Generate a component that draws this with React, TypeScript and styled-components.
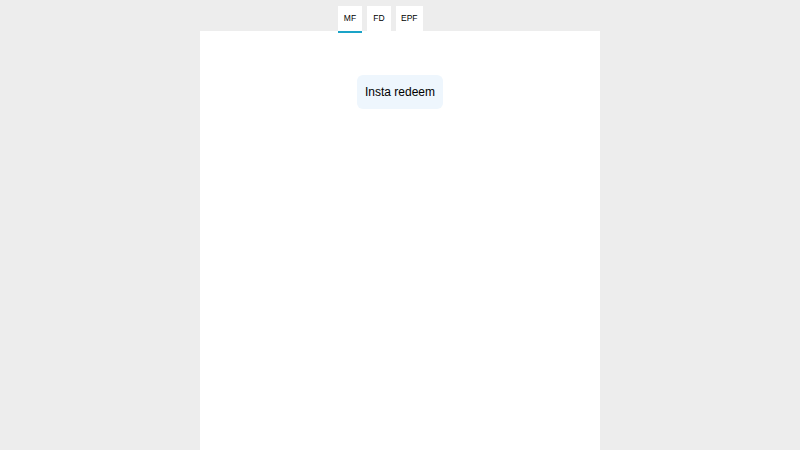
import styled, { createGlobalStyle } from "styled-components";
import { useState } from "react";

const GlobalStyle = createGlobalStyle`
  html, body {
    margin: 0;
    padding: 0;
    background: #ededed;
    font-family: "Liberation Sans", Arial, sans-serif;
  }
`;

const TABS = ["MF", "FD", "EPF"];

const App: React.FC = () => {
  const [active, setActive] = useState("MF");

  return (
    <StyledPage>
      <GlobalStyle />
      <TabBar>
        {TABS.map((t) => (
          <Tab key={t} $active={active === t} onClick={() => setActive(t)}>
            {t}
          </Tab>
        ))}
      </TabBar>
      <Panel>
        <RedeemButton>Insta redeem</RedeemButton>
      </Panel>
    </StyledPage>
  );
};

const StyledPage = styled.div`
  height: 100vh;
  display: flex;
  flex-direction: column;
  align-items: center;
  padding-top: 6px;
  box-sizing: border-box;
  overflow: hidden;
`;

const TabBar = styled.div`
  width: 400px;
  display: flex;
  gap: 5px;
  padding-left: 138px;
  box-sizing: border-box;
  position: relative;
  z-index: 1;
  margin-bottom: -2px;
`;

const Tab = styled.button<{ $active: boolean }>`
  height: 27px;
  padding: 0 5px;
  min-width: 24px;
  justify-content: center;
  border: none;
  border-bottom: 2px solid ${(p) => (p.$active ? "#1aa3c7" : "transparent")};
  background: #fff;
  color: #000;
  font-family: "Liberation Sans", Arial, sans-serif;
  font-size: 8.5px;
  line-height: 25px;
  cursor: pointer;
  display: flex;
  align-items: flex-start;
`;

const Panel = styled.div`
  width: 400px;
  flex: 1;
  background: #fff;
  display: flex;
  flex-direction: column;
  align-items: center;
  padding-top: 44px;
  box-sizing: border-box;
`;

const RedeemButton = styled.button`
  width: 86px;
  height: 34px;
  border: none;
  border-radius: 6px;
  background: #eef6fd;
  color: #000;
  font-family: "Liberation Sans", Arial, sans-serif;
  font-size: 12px;
  cursor: pointer;
  padding: 0;
`;

export default App;
